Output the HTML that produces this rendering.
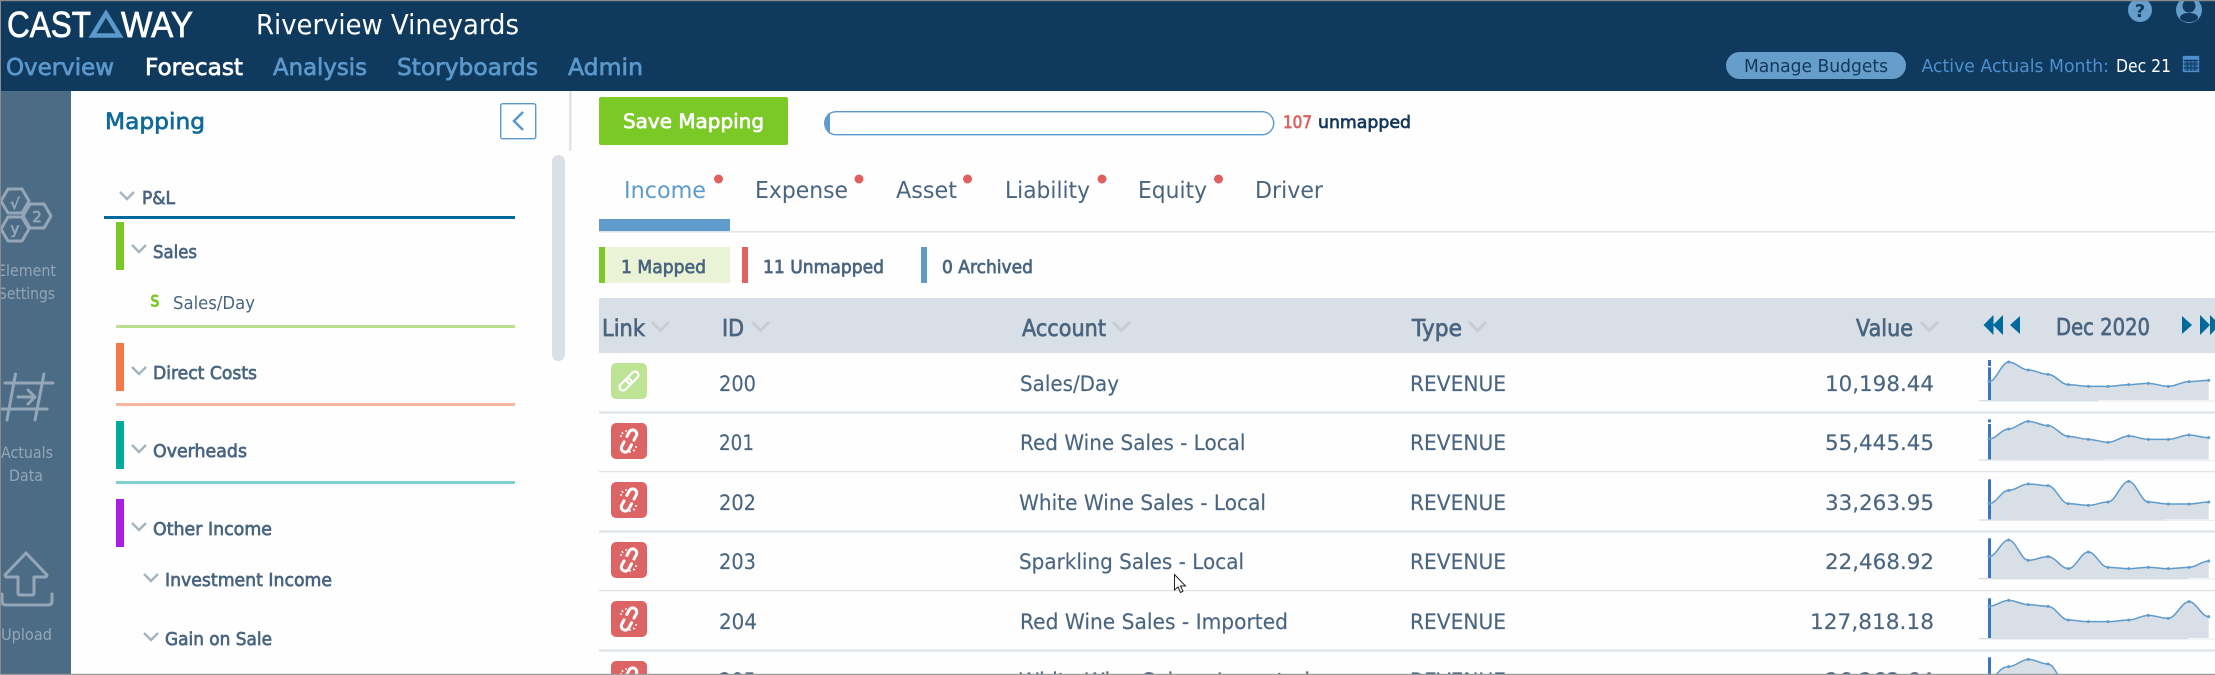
<!DOCTYPE html>
<html lang="en"><head><meta charset="utf-8"><title>Castaway Mapping</title>
<style>
html,body{margin:0;padding:0;width:2215px;height:675px;overflow:hidden;background:#fdfefd}
svg{display:block}
text{font-family:"DejaVu Sans","Liberation Sans",sans-serif;fill:currentColor}
.b{stroke:currentColor;stroke-width:.7}
.c{fill:none;stroke:#a5b3c0;stroke-width:2.4}
.h{fill:none;stroke:#c6cdd4;stroke-width:3}
.r{font-size:21.5px;color:#4a6580;stroke:currentColor;stroke-width:.15}
.l{font-size:18px;color:#4a6580}
.th{font-size:23px;color:#4a6580}
.tab{font-size:23px;color:#4a6580}
.sb{font-size:16px;color:#93a7b8}
.sub{font-size:17.5px;color:#4a6580}
.nav{font-size:23px;color:#5b98cc}
.sl{fill:none;stroke:#5f9bcb;stroke-width:4.5;marker-start:url(#dot);marker-mid:url(#dot);marker-end:url(#dot)}
.ar{fill:#d9dfe6;stroke:none}
.ic{fill:none;stroke:#93a7b8;stroke-width:3;stroke-linejoin:round;stroke-linecap:round}
</style></head>
<body>
<svg xmlns="http://www.w3.org/2000/svg" width="2215" height="675" viewBox="0 0 2215 675">
<defs>
<marker id="dot" markerUnits="userSpaceOnUse" markerWidth="12" markerHeight="12" refX="6" refY="6"><circle cx="6" cy="6" r="4.5" fill="#5f9bcb"/></marker>
<g id="good">
<rect x="0" y="0" width="36" height="36" rx="5" fill="#bde395"/>
<g transform="translate(18 18) rotate(-45)" fill="none" stroke="#fff" stroke-width="2.2">
<rect x="-12" y="-3.5" width="14" height="7" rx="3.5"/>
<rect x="-2" y="-3.500" width="14" height="7" rx="3.5"/>
</g>
</g>
<g id="bad">
<rect x="0" y="0" width="36" height="36" rx="5" fill="#dd6464"/>
<g transform="translate(18 18) rotate(-62)" fill="none" stroke="#fff" stroke-width="3" stroke-linecap="round">
<path d="M-3-4H-8A4 4 0 0 0-8 4H-2"/>
<path d="M3-4H8A4 4 0 0 1 8 4H3"/>
</g>
<path d="M11 9l1 2M15 7v2M9 13h2M22 27l2 1M19 28v2M24 24h2" stroke="#fff" stroke-width="1.4" fill="none"/>
</g>
</defs>

<rect width="2215" height="675" fill="#fdfefd"/>

<!-- header -->
<rect x="0" y="0" width="2215" height="91" fill="#0f3a5e"/>
<text x="7" y="37" font-size="36" class="b" textLength="84" lengthAdjust="spacingAndGlyphs" style="font-family:'Liberation Sans',sans-serif;color:#fff">CAST</text>
<path d="M106 13.500 L119.500 35.500 H92.500 Z" fill="none" stroke="#5b98cc" stroke-width="4.5"/>
<text x="121" y="37" font-size="36" class="b" textLength="72" lengthAdjust="spacingAndGlyphs" style="font-family:'Liberation Sans',sans-serif;color:#fff">WAY</text>
<text x="256" y="34" font-size="27.5" textLength="263" lengthAdjust="spacingAndGlyphs" style="color:#fff">Riverview Vineyards</text>

<text class="nav b" x="6" y="75" textLength="108" lengthAdjust="spacingAndGlyphs">Overview</text>
<text class="nav b" x="145" y="75" textLength="98" lengthAdjust="spacingAndGlyphs" style="color:#fff">Forecast</text>
<text class="nav b" x="273" y="75" textLength="94" lengthAdjust="spacingAndGlyphs">Analysis</text>
<text class="nav b" x="397" y="75" textLength="141" lengthAdjust="spacingAndGlyphs">Storyboards</text>
<text class="nav b" x="568" y="75" textLength="75" lengthAdjust="spacingAndGlyphs">Admin</text>

<!-- top right icons -->
<circle cx="2140" cy="10" r="12" fill="#659dcb"/>
<text x="2140" y="17" font-size="18" font-weight="bold" text-anchor="middle" style="color:#0f3a5e">?</text>
<circle cx="2189" cy="10" r="13" fill="#659dcb"/>
<circle cx="2189" cy="6" r="6.5" fill="#0f3a5e"/>
<ellipse cx="2189" cy="17.5" rx="9" ry="4.6" fill="#0f3a5e"/>
<rect x="2120" y="0" width="95" height="1" fill="#8a8a8a"/>

<rect x="1726" y="52" width="180" height="27" rx="13.5" fill="#659dcb"/>
<text x="1744" y="72" font-size="18" textLength="144" lengthAdjust="spacingAndGlyphs" style="color:#14385a">Manage Budgets</text>
<text x="1921.5" y="72" font-size="18" textLength="187.5" lengthAdjust="spacingAndGlyphs" style="color:#4f8fcc">Active Actuals Month:</text>
<text x="2116" y="72" font-size="18" textLength="55" lengthAdjust="spacingAndGlyphs" style="color:#fff">Dec 21</text>
<g fill="none" stroke="#4f8fcc" stroke-width="1.3">
<rect x="2183.5" y="56.5" width="15" height="15" fill="#2b6aa5"/>
<path d="M2183.5 60.5H2198.5M2183.5 64H2198.5M2183.5 68H2198.5M2187.3 57V71M2191 57V71M2194.8 57V71" stroke="#0f3a5e" stroke-width="1"/>
<path d="M2183.5 56.5h15v3h-15z" fill="#4f8fcc" stroke="none"/>
</g>

<!-- sidebar -->
<rect x="0" y="91" width="71" height="584" fill="#4c6b85"/>
<g class="ic">
<path d="M8 189H22L29 201L22 213H8L1 201Z"/>
<path d="M30 204H44L51 216L44 228H30L23 216Z"/>
<path d="M8 217H22L29 229L22 241H8L1 229Z"/>
</g>
<text x="15" y="209" font-size="15" text-anchor="middle" class="b" style="color:#93a7b8">√</text>
<text x="37" y="222" font-size="15" text-anchor="middle" class="b" style="color:#93a7b8">2</text>
<text x="15" y="234" font-size="15" text-anchor="middle" class="b" style="color:#93a7b8">y</text>
<text class="sb" x="-3" y="276" textLength="59" lengthAdjust="spacingAndGlyphs">Element</text>
<text class="sb" x="-2" y="299" textLength="57" lengthAdjust="spacingAndGlyphs">Settings</text>

<g class="ic">
<path d="M5 383H53M1 409H47M15.5 374L7 420M44 374L35 420"/>
<path d="M18 397H34M28 390L35 397L28 404"/>
</g>
<text class="sb" x="1" y="458" textLength="52" lengthAdjust="spacingAndGlyphs">Actuals</text>
<text class="sb" x="9" y="481" textLength="34" lengthAdjust="spacingAndGlyphs">Data</text>

<g class="ic">
<path d="M26 553L47 575L46 577H34V593Q34 595 32 595H20Q18 595 18 593V577H6L5 575Z"/>
<path d="M2 594V601Q2 605 6 605H48Q52 605 52 601V594"/>
</g>
<text class="sb" x="1" y="640" textLength="51" lengthAdjust="spacingAndGlyphs">Upload</text>

<!-- left panel -->
<text x="105" y="129" font-size="22.5" class="b" textLength="100" lengthAdjust="spacingAndGlyphs" style="color:#0f6a9a">Mapping</text>
<rect x="500.7" y="103.7" width="35" height="35" rx="2" fill="none" stroke="#5b98cc" stroke-width="1.4"/>
<path d="M523 112L514 121L523 130" fill="none" stroke="#5b98cc" stroke-width="2.5"/>
<rect x="569" y="91" width="2.5" height="60" fill="#dde3ea"/>
<rect x="552" y="155" width="13" height="206" rx="6.5" fill="#dbe0e6"/>

<path class="c" d="M120 192l7 7l7-7"/>
<text class="l b" x="142" y="204" textLength="33" lengthAdjust="spacingAndGlyphs">P&amp;L</text>
<rect x="104" y="216" width="411" height="3" fill="#006a9c"/>

<rect x="116" y="222" width="8" height="48" fill="#7ac926"/>
<path class="c" d="M132 245l7 7l7-7"/>
<text class="l b" x="153" y="258" textLength="44" lengthAdjust="spacingAndGlyphs">Sales</text>
<text x="150" y="307" font-size="17" font-weight="bold" textLength="10" lengthAdjust="spacingAndGlyphs" style="color:#7ac926">S</text>
<text class="l" x="173" y="309" textLength="82" lengthAdjust="spacingAndGlyphs">Sales/Day</text>
<rect x="116" y="325" width="399" height="3" fill="#bde08f"/>

<rect x="116" y="343" width="8" height="48" fill="#f47a4b"/>
<path class="c" d="M132 367l7 7l7-7"/>
<text class="l b" x="153" y="379" textLength="104" lengthAdjust="spacingAndGlyphs">Direct Costs</text>
<rect x="116" y="403" width="399" height="3" fill="#f7b6a2"/>

<rect x="116" y="421" width="8" height="48" fill="#00ab9c"/>
<path class="c" d="M132 445l7 7l7-7"/>
<text class="l b" x="153" y="457" textLength="94" lengthAdjust="spacingAndGlyphs">Overheads</text>
<rect x="116" y="481" width="399" height="3" fill="#7fd1cb"/>

<rect x="116" y="499" width="8" height="48" fill="#aa1fe3"/>
<path class="c" d="M132 523l7 7l7-7"/>
<text class="l b" x="153" y="535" textLength="119" lengthAdjust="spacingAndGlyphs">Other Income</text>

<path class="c" d="M144 574l7 7l7-7"/>
<text class="l b" x="165" y="586" textLength="167" lengthAdjust="spacingAndGlyphs">Investment Income</text>
<path class="c" d="M144 633l7 7l7-7"/>
<text class="l b" x="165" y="645" textLength="107" lengthAdjust="spacingAndGlyphs">Gain on Sale</text>

<!-- toolbar -->
<rect x="599" y="97" width="189" height="48" rx="2" fill="#7ac926"/>
<text x="623" y="128" font-size="19.5" class="b" textLength="141" lengthAdjust="spacingAndGlyphs" style="color:#fff">Save Mapping</text>
<rect x="824.7" y="111.7" width="449" height="23" rx="11.5" fill="#fdfefd" stroke="#5b98cc" stroke-width="1.4"/>
<path d="M830 112.5Q825.5 114 825.5 123Q825.5 132 830 134Z" fill="#5f9bcb"/>
<text x="1283" y="128" font-size="17" class="b" textLength="29" lengthAdjust="spacingAndGlyphs" style="color:#d9625f">107</text>
<text x="1318" y="128" font-size="17" class="b" textLength="93" lengthAdjust="spacingAndGlyphs" style="color:#14385a">unmapped</text>

<!-- tabs -->
<text class="tab" x="624" y="198" textLength="82" lengthAdjust="spacingAndGlyphs" style="color:#5f9bcb">Income</text>
<text class="tab" x="755" y="198" textLength="93" lengthAdjust="spacingAndGlyphs">Expense</text>
<text class="tab" x="896" y="198" textLength="61" lengthAdjust="spacingAndGlyphs">Asset</text>
<text class="tab" x="1005" y="198" textLength="85" lengthAdjust="spacingAndGlyphs">Liability</text>
<text class="tab" x="1138" y="198" textLength="69" lengthAdjust="spacingAndGlyphs">Equity</text>
<text class="tab" x="1255" y="198" textLength="68" lengthAdjust="spacingAndGlyphs">Driver</text>
<g fill="#e06060">
<circle cx="718.5" cy="179" r="4.5"/><circle cx="859" cy="179" r="4.5"/><circle cx="967.5" cy="179" r="4.5"/><circle cx="1102" cy="179" r="4.5"/><circle cx="1218.5" cy="179" r="4.5"/>
</g>
<rect x="599" y="231" width="1616" height="1.5" fill="#dfe5eb"/>
<rect x="599" y="219" width="131" height="12" fill="#5f9bcb"/>

<!-- sub tabs -->
<rect x="599" y="247" width="131" height="36" fill="#ebf3d6"/>
<rect x="599" y="247" width="6" height="36" fill="#7ac926"/>
<text class="sub b" x="621" y="273" textLength="85" lengthAdjust="spacingAndGlyphs">1 Mapped</text>
<rect x="742" y="247" width="6" height="36" fill="#dd6464"/>
<text class="sub b" x="763" y="273" textLength="121" lengthAdjust="spacingAndGlyphs">11 Unmapped</text>
<rect x="921" y="247" width="6" height="36" fill="#5f9bcb"/>
<text class="sub b" x="942" y="273" textLength="91" lengthAdjust="spacingAndGlyphs">0 Archived</text>

<!-- table header -->
<rect x="599" y="298" width="1616" height="55" fill="#d9dfe6"/>
<text class="th b" x="602" y="336" textLength="43" lengthAdjust="spacingAndGlyphs">Link</text>
<path class="h" d="M652 322l8.5 8.5l8.5-8.5"/>
<text class="th b" x="722" y="336" textLength="22" lengthAdjust="spacingAndGlyphs">ID</text>
<path class="h" d="M752 322l8.5 8.5l8.5-8.5"/>
<text class="th b" x="1022" y="336" textLength="84" lengthAdjust="spacingAndGlyphs">Account</text>
<path class="h" d="M1113 322l8.5 8.5l8.5-8.5"/>
<text class="th b" x="1412" y="336" textLength="50" lengthAdjust="spacingAndGlyphs">Type</text>
<path class="h" d="M1469 322l8.5 8.5l8.5-8.5"/>
<text class="th b" x="1856" y="336" textLength="57" lengthAdjust="spacingAndGlyphs">Value</text>
<path class="h" d="M1921 322l8.5 8.5l8.5-8.5"/>
<g fill="#006a9c">
<path d="M1983.5 325L1993.5 315V335Z"/><path d="M1993 325L2003 315V335Z"/><path d="M2010 325L2020 316V334Z"/>
<path d="M2182 316L2192 325L2182 334Z"/><path d="M2200 315L2210 325L2200 335Z"/><path d="M2210 315L2220 325L2210 335Z"/>
</g>
<text class="th b" x="2056" y="335" font-size="21" textLength="94" lengthAdjust="spacingAndGlyphs">Dec 2020</text>

<!-- row separators -->
<g fill="#dce2e8">
<rect x="599" y="411.5" width="1616" height="2"/>
<rect x="599" y="471" width="1616" height="1.2"/>
<rect x="599" y="530.5" width="1616" height="2"/>
<rect x="599" y="590" width="1616" height="1.2"/>
<rect x="599" y="649.5" width="1616" height="2"/>
</g>

<!-- rows -->
<use href="#good" x="611" y="363"/>
<text class="r" x="719" y="391" textLength="37" lengthAdjust="spacingAndGlyphs">200</text>
<text class="r" x="1020" y="391" textLength="99" lengthAdjust="spacingAndGlyphs">Sales/Day</text>
<text class="r" x="1410" y="391" textLength="96" lengthAdjust="spacingAndGlyphs">REVENUE</text>
<text class="r" x="1825" y="391" textLength="109" lengthAdjust="spacingAndGlyphs">10,198.44</text>

<use href="#bad" x="611" y="423"/>
<text class="r" x="719" y="450" textLength="35" lengthAdjust="spacingAndGlyphs">201</text>
<text class="r" x="1020" y="450" textLength="225.5" lengthAdjust="spacingAndGlyphs">Red Wine Sales - Local</text>
<text class="r" x="1410" y="450" textLength="96" lengthAdjust="spacingAndGlyphs">REVENUE</text>
<text class="r" x="1825" y="450" textLength="109" lengthAdjust="spacingAndGlyphs">55,445.45</text>

<use href="#bad" x="611" y="482"/>
<text class="r" x="719" y="510" textLength="37" lengthAdjust="spacingAndGlyphs">202</text>
<text class="r" x="1019" y="510" textLength="247" lengthAdjust="spacingAndGlyphs">White Wine Sales - Local</text>
<text class="r" x="1410" y="510" textLength="96" lengthAdjust="spacingAndGlyphs">REVENUE</text>
<text class="r" x="1825" y="510" textLength="109" lengthAdjust="spacingAndGlyphs">33,263.95</text>

<use href="#bad" x="611" y="542"/>
<text class="r" x="719" y="569" textLength="37" lengthAdjust="spacingAndGlyphs">203</text>
<text class="r" x="1019" y="569" textLength="225" lengthAdjust="spacingAndGlyphs">Sparkling Sales - Local</text>
<text class="r" x="1410" y="569" textLength="96" lengthAdjust="spacingAndGlyphs">REVENUE</text>
<text class="r" x="1825" y="569" textLength="109" lengthAdjust="spacingAndGlyphs">22,468.92</text>

<use href="#bad" x="611" y="601"/>
<text class="r" x="719" y="629" textLength="38" lengthAdjust="spacingAndGlyphs">204</text>
<text class="r" x="1020" y="629" textLength="268" lengthAdjust="spacingAndGlyphs">Red Wine Sales - Imported</text>
<text class="r" x="1410" y="629" textLength="96" lengthAdjust="spacingAndGlyphs">REVENUE</text>
<text class="r" x="1810" y="629" textLength="124" lengthAdjust="spacingAndGlyphs">127,818.18</text>

<use href="#bad" x="611" y="661"/>
<text class="r" x="719" y="688" textLength="37" lengthAdjust="spacingAndGlyphs">205</text>
<text class="r" x="1019" y="688" textLength="291" lengthAdjust="spacingAndGlyphs">White Wine Sales - Imported</text>
<text class="r" x="1410" y="688" textLength="96" lengthAdjust="spacingAndGlyphs">REVENUE</text>
<text class="r" x="1825" y="688" textLength="109" lengthAdjust="spacingAndGlyphs">26,263.64</text>

<!-- sparklines, drawn in 3x coords -->
<g transform="translate(1900 290) scale(.33333)">
<path class="ar" d="M267 275C289 275 304 216 326 216S363 240 385 240S422 253 444 253S483 284 505 284S543 289 565 289S602 289 624 289S664 284 686 284S723 280 745 280S783 289 805 289S845 275 867 275S904 271 926 271V330H267Z"/>
<path d="M237 332H595" stroke="#d5dde6" stroke-width="4"/><path d="M595 333H945" stroke="#d5dde6" stroke-width="3" stroke-dasharray="3 3"/>
<path d="M268.500 210V228M268.500 232V330" stroke="#3a76bf" stroke-width="9"/>
<path class="sl" d="M267 275C289 275 304 216 326 216S363 240 385 240S422 253 444 253S483 284 505 284S543 289 565 289S602 289 624 289S664 284 686 284S723 280 745 280S783 289 805 289S845 275 867 275S904 271 926 271"/>

<path class="ar" d="M267 447C289 447 304 417 326 417S363 394 385 394S422 407 444 407S483 439 505 439S543 448 565 448S602 457 624 457S664 438 686 438S723 448 745 448S783 448 805 448S845 435 867 435S904 443 926 443V508H267Z"/>
<path d="M237 510H610" stroke="#d5dde6" stroke-width="4"/><path d="M610 511H945" stroke="#d5dde6" stroke-width="3" stroke-dasharray="3 3"/>
<path d="M268.500 388V397M268.500 402V508" stroke="#3a76bf" stroke-width="9"/>
<path class="sl" d="M267 447C289 447 304 417 326 417S363 394 385 394S422 407 444 407S483 439 505 439S543 448 565 448S602 457 624 457S664 438 686 438S723 448 745 448S783 448 805 448S845 435 867 435S904 443 926 443"/>

<path class="ar" d="M267 641C289 641 304 601 326 601S363 582 385 582S422 587 444 587S483 641 505 641S543 646 565 646S602 636 624 636S664 574 686 574S723 636 745 636S783 642 805 642S845 642 867 642S904 636 926 636V688H267Z"/>
<path d="M237 690H797" stroke="#d5dde6" stroke-width="4"/><path d="M797 691H945" stroke="#d5dde6" stroke-width="3" stroke-dasharray="3 3"/>
<path d="M268.500 568V688" stroke="#3a76bf" stroke-width="9"/>
<path class="sl" d="M267 641C289 641 304 601 326 601S363 582 385 582S422 587 444 587S483 641 505 641S543 646 565 646S602 636 624 636S664 574 686 574S723 636 745 636S783 642 805 642S845 642 867 642S904 636 926 636"/>

<path class="ar" d="M267 800C289 800 304 750 326 750S363 811 385 811S422 800 444 800S483 836 505 836S543 786 565 786S602 832 624 832S664 836 686 836S723 832 745 832S783 836 805 836S845 832 867 832S904 813 926 813V864H267Z"/>
<path d="M237 866H862" stroke="#d5dde6" stroke-width="4"/><path d="M862 867H945" stroke="#d5dde6" stroke-width="3" stroke-dasharray="3 3"/>
<path d="M268.500 745V864" stroke="#3a76bf" stroke-width="9"/>
<path class="sl" d="M267 800C289 800 304 750 326 750S363 811 385 811S422 800 444 800S483 836 505 836S543 786 565 786S602 832 624 832S664 836 686 836S723 832 745 832S783 836 805 836S845 832 867 832S904 813 926 813"/>

<path class="ar" d="M267 949C289 949 304 931 326 931S363 944 385 944S422 949 444 949S483 990 505 990S543 995 565 995S602 995 624 995S664 990 686 990S723 976 745 976S783 985 805 985S845 935 867 935S904 980 926 980V1044H267Z"/>
<path d="M237 1046H862" stroke="#d5dde6" stroke-width="4"/><path d="M862 1047H945" stroke="#d5dde6" stroke-width="3" stroke-dasharray="3 3"/>
<path d="M268.500 925V1044" stroke="#3a76bf" stroke-width="9"/>
<path class="sl" d="M267 949C289 949 304 931 326 931S363 944 385 944S422 949 444 949S483 990 505 990S543 995 565 995S602 995 624 995S664 990 686 990S723 976 745 976S783 985 805 985S845 935 867 935S904 980 926 980"/>

<path class="ar" d="M267 1190C289 1150 304 1130 326 1130S363 1108 385 1108S422 1122 444 1122S483 1190 505 1190V1230H267Z"/>
<path d="M268.500 1102V1230" stroke="#3a76bf" stroke-width="9"/>
<path class="sl" d="M267 1190C289 1150 304 1130 326 1130S363 1108 385 1108S422 1122 444 1122S483 1190 505 1190"/>
</g>

<!-- cursor -->
<path d="M1174.500 574.500V590L1178 587L1180.500 592.500L1183 591L1180.500 586H1185.500Z" fill="#fff" stroke="#222" stroke-width="1"/>

<!-- frame -->
<rect x="0" y="0" width="2215" height="1.200" fill="#8a8a8a"/>
<rect x="0" y="0" width="1" height="675" fill="#8a8a8a"/>
<rect x="0" y="673.800" width="2215" height="1.200" fill="#9a9a9a"/>
</svg>
</body></html>
